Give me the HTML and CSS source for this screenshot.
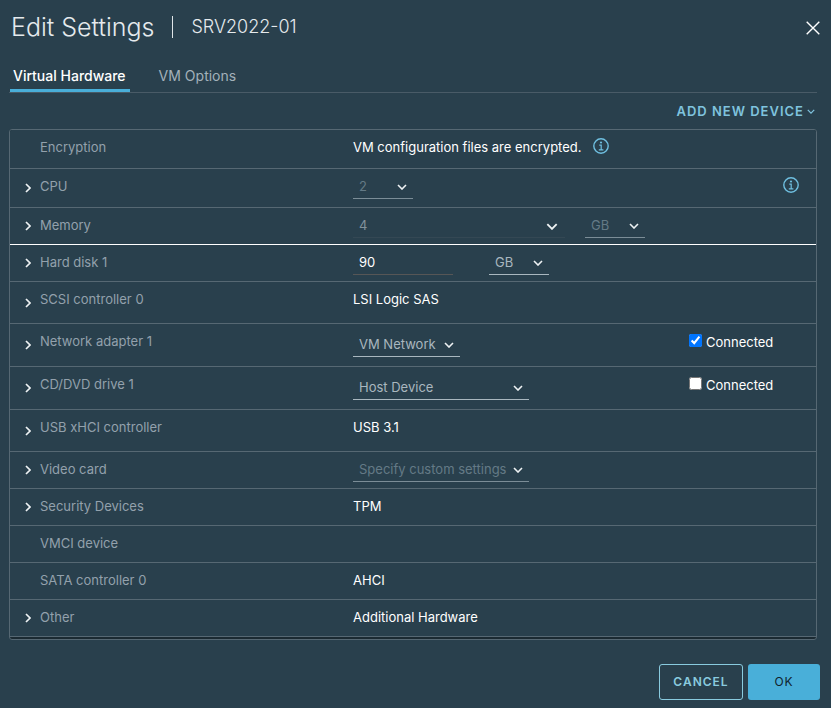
FILE: index.html
```html
<!DOCTYPE html>
<html lang="en">
<head>
<meta charset="utf-8">
<title>Edit Settings</title>
<link rel="stylesheet" href="styles.css">
</head>
<body>
<svg class="defs" aria-hidden="true">
  <symbol id="down" viewBox="0 0 10 6"><path d="M1 1l4 4 4-4" fill="none" stroke="currentColor" stroke-width="1.6"/></symbol>
  <symbol id="right" viewBox="0 0 6 10"><path d="M1 1l4 4-4 4" fill="none" stroke="currentColor" stroke-width="1.7"/></symbol>
  <symbol id="info" viewBox="0 0 16 16"><circle cx="8" cy="8" r="7.2" fill="none" stroke="currentColor" stroke-width="1.4"/><circle cx="8" cy="4.5" r="1.1" fill="currentColor"/><path d="M6.3 7.1h1.9v4.6M5.8 11.8h4.6" fill="none" stroke="currentColor" stroke-width="1.2"/></symbol>
</svg>
<form class="dialog">
  <header class="head">
    <h1>Edit Settings</h1>
    <span class="vm">SRV2022-01</span>
    <button class="close" type="button" aria-label="Close"><svg viewBox="0 0 14 14"><path d="M.7.7l12.6 12.6M13.3.7L.7 13.3" stroke="currentColor" stroke-width="1.4"/></svg></button>
  </header>
  <nav class="tabs">
    <button type="button" class="tab active">Virtual Hardware</button>
    <button type="button" class="tab">VM Options</button>
  </nav>
  <div class="actions">
    <button type="button" class="add">ADD NEW DEVICE<svg><use href="#down"/></svg></button>
  </div>
  <section class="devices">
    <div class="row tall">
      <span class="name">Encryption</span>
      <div class="value text">VM configuration files are encrypted.<button type="button" class="info" aria-label="Encryption information"><svg><use href="#info"/></svg></button></div>
    </div>
    <div class="row tall">
      <button type="button" class="caret" aria-label="Expand CPU"><svg><use href="#right"/></svg></button>
      <label class="name" for="cpu">CPU</label>
      <div class="value"><span class="select short"><select id="cpu" disabled><option>2</option></select><svg><use href="#down"/></svg></span></div>
      <div class="side end"><button type="button" class="info" aria-label="CPU information"><svg><use href="#info"/></svg></button></div>
    </div>
    <div class="row strong">
      <button type="button" class="caret" aria-label="Expand Memory"><svg><use href="#right"/></svg></button>
      <label class="name" for="memory">Memory</label>
      <div class="value"><span class="select combo"><input id="memory" type="text" value="4" disabled><svg><use href="#down"/></svg></span><span class="select short unit-near"><select aria-label="Memory unit" disabled><option>GB</option></select><svg><use href="#down"/></svg></span></div>
    </div>
    <div class="row">
      <button type="button" class="caret" aria-label="Expand Hard disk 1"><svg><use href="#right"/></svg></button>
      <label class="name" for="disk">Hard disk 1</label>
      <div class="value"><input class="size" id="disk" type="text" value="90"><span class="select short unit-far"><select aria-label="Disk unit"><option>GB</option></select><svg><use href="#down"/></svg></span></div>
    </div>
    <div class="row xtall">
      <button type="button" class="caret" aria-label="Expand SCSI controller 0"><svg><use href="#right"/></svg></button>
      <span class="name">SCSI controller 0</span>
      <div class="value text">LSI Logic SAS</div>
    </div>
    <div class="row picker">
      <button type="button" class="caret" aria-label="Expand Network adapter 1"><svg><use href="#right"/></svg></button>
      <label class="name" for="net">Network adapter 1</label>
      <div class="value"><span class="select network"><select id="net"><option>VM Network</option></select><svg><use href="#down"/></svg></span></div>
      <div class="side"><label class="check"><input type="checkbox" checked>Connected</label></div>
    </div>
    <div class="row picker">
      <button type="button" class="caret" aria-label="Expand CD/DVD drive 1"><svg><use href="#right"/></svg></button>
      <label class="name" for="cd">CD/DVD drive 1</label>
      <div class="value"><span class="select wide"><select id="cd"><option>Host Device</option></select><svg><use href="#down"/></svg></span></div>
      <div class="side"><label class="check"><input type="checkbox">Connected</label></div>
    </div>
    <div class="row xtall">
      <button type="button" class="caret" aria-label="Expand USB xHCI controller"><svg><use href="#right"/></svg></button>
      <span class="name">USB xHCI controller</span>
      <div class="value text">USB 3.1</div>
    </div>
    <div class="row">
      <button type="button" class="caret" aria-label="Expand Video card"><svg><use href="#right"/></svg></button>
      <label class="name" for="video">Video card</label>
      <div class="value"><span class="select wide"><select id="video" disabled><option>Specify custom settings</option></select><svg><use href="#down"/></svg></span></div>
    </div>
    <div class="row">
      <button type="button" class="caret" aria-label="Expand Security Devices"><svg><use href="#right"/></svg></button>
      <span class="name">Security Devices</span>
      <div class="value text">TPM</div>
    </div>
    <div class="row"><span class="name">VMCI device</span></div>
    <div class="row">
      <span class="name">SATA controller 0</span>
      <div class="value text">AHCI</div>
    </div>
    <div class="row">
      <button type="button" class="caret" aria-label="Expand Other"><svg><use href="#right"/></svg></button>
      <span class="name">Other</span>
      <div class="value text">Additional Hardware</div>
    </div>
  </section>
  <footer class="foot">
    <button type="button" class="btn outline">CANCEL</button>
    <button type="submit" class="btn primary">OK</button>
  </footer>
</form>
</body>
</html>
```
FILE: styles.css
```css
* { box-sizing: border-box; }

body {
  margin: 0;
  background: #29404d;
  color: #fff;
  font: 13px/18px Inter, "Open Sans", sans-serif;
}

button, input, select {
  margin: 0;
  padding: 0;
  border: 0;
  background: none;
  color: inherit;
  font: inherit;
}

svg { display: block; }
.defs { position: absolute; width: 0; height: 0; }

.dialog {
  min-height: 100vh;
  padding: 12px 14px 8px 9px;
  border-bottom: 1px solid #233343;
}

/* Header */
.head { display: flex; align-items: center; height: 30px; padding-left: 2px; color: #e5eaed; }
h1 { margin: 0; font-size: 25px; font-weight: 300; line-height: 30px; white-space: nowrap; }
.vm {
  margin-left: 18px;
  font-size: 18px;
  font-weight: 300;
  line-height: 22px;
  padding-left: 18px;
  border-left: 1px solid #dfe5e8;
}
.close { margin: 2px -3px 0 auto; color: #fff; }
.close svg { width: 14px; height: 14px; }

/* Tabs */
.tabs {
  display: flex;
  gap: 26px;
  height: 37px;
  margin-top: 14px;
  padding-left: 1px;
  border-bottom: 1px solid #495b67;
}
.tab {
  padding: 6px 3px 0;
  border-bottom: 3px solid transparent;
  color: #a3b1ba;
  font-size: 14px;
}
.tab.active { padding-right: 4px; border-color: #49afd9; color: #fff; font-weight: 500; }

.actions { display: flex; justify-content: flex-end; padding: 9px 2px 9px 0; }
.add {
  display: flex;
  align-items: center;
  gap: 3px;
  color: #7fc3de;
  font-weight: 600;
  letter-spacing: 1px;
}
.add svg { width: 8px; height: 5px; }

/* Device list */
.devices {
  padding-bottom: 2px;
  border: 1px solid #566873;
  border-radius: 3px;
  background: #1b2a32;
}
.row {
  display: grid;
  grid-template-columns: 30px 313px minmax(0, 1fr) 127px;
  min-height: 37px;
  border-bottom: 1px solid #566873;
  background: #29404d;
}
.row:first-child { border-radius: 2px 2px 0 0; }
.row.tall { min-height: 39px; }
.row.xtall { min-height: 42px; }
.row.picker { min-height: 43px; }
.row.strong { border-bottom-color: #fff; }

.caret { grid-column: 1; align-self: center; justify-self: center; padding-left: 6px; color: #eef2f4; }
.caret svg { width: 6px; height: 10px; }
.name { grid-column: 2; padding-top: 8px; color: #93a1ac; }
.value { grid-column: 3; display: flex; align-items: flex-start; padding-top: 6px; }
.value.text { padding-top: 8px; }
.picker .value { padding-top: 9px; }
.side { grid-column: 4; padding-top: 9px; }
.side.end { display: flex; align-items: flex-start; justify-content: flex-end; padding: 8px 17px 0 0; }

.info { color: #6fbfe0; }
.info svg { width: 16px; height: 16px; }
.text .info { margin-left: 11px; }

.select { position: relative; flex: none; height: 24px; border-bottom: 1px solid #a9b7bf; color: #a9b7bf; }
.select select, .select input { display: block; appearance: none; width: 100%; height: 22px; padding-left: 6px; opacity: 1; }
.select option { color: #000; }
.select svg { position: absolute; right: 6px; top: 9px; width: 10px; height: 6px; color: #eef2f4; pointer-events: none; }
.select:has(:disabled) { border-color: #7b8d97; color: #647a86; }
.select.short { width: 60px; }
.select.network { width: 107px; }
.select.wide { width: 176px; }
.select.combo { width: 212px; border-color: #344854; }
.combo input { color: #82929c; }
.select.combo svg { right: 7px; width: 12px; height: 7px; }
.unit-near { margin-left: 20px; }
.unit-far { margin-left: 36px; }
.size { width: 100px; height: 24px; padding: 0 0 2px 6px; border-bottom: 1px solid #565656; }

.check { display: flex; align-items: center; gap: 4px; }
.check input { width: 13px; height: 13px; margin-top: -3px; accent-color: #0075ff; }

/* Footer */
.foot { display: flex; justify-content: flex-end; gap: 5px; margin: 24px -3px 0 0; }
.btn { height: 36px; border-radius: 3px; font-size: 12px; letter-spacing: 1px; }
.outline { width: 84px; border: 1px solid #89cbdf; color: #89cbdf; font-weight: 600; }
.primary { width: 72px; background: #49afd9; color: #10222c; }
```
